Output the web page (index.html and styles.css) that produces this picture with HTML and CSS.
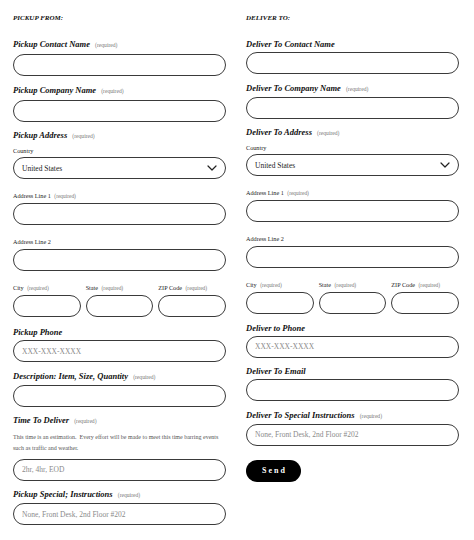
FILE: index.html
```html
<!DOCTYPE html>
<html lang="en">
<head>
<meta charset="utf-8">
<title>Delivery Request</title>
<link rel="stylesheet" href="styles.css">
</head>
<body>
<form class="page">
  <section class="col">
    <h2 class="heading">PICKUP FROM:</h2>
    <div class="field">
      <div class="label label-tall">Pickup Contact Name <span class="req">(required)</span></div>
      <input class="input" type="text">
    </div>
    <div class="field">
      <div class="label label-tall">Pickup Company Name <span class="req">(required)</span></div>
      <input class="input" type="text">
    </div>
    <div class="field">
      <div class="label label-group">Pickup Address <span class="req">(required)</span></div>
      <div class="sublabel sublabel-first">Country</div>
      <div class="input select"><span>United States</span><svg class="chev" width="10" height="6" viewBox="0 0 10 6"><path d="M1 1 L5 5 L9 1" fill="none" stroke="#222" stroke-width="1.2" stroke-linecap="round" stroke-linejoin="round"/></svg></div>
      <div class="sublabel">Address Line 1 <span class="req">(required)</span></div>
      <input class="input" type="text">
      <div class="sublabel">Address Line 2</div>
      <input class="input" type="text">
      <div class="trio">
        <div class="cell"><div class="sublabel">City <span class="req">(required)</span></div><input class="input" type="text"></div>
        <div class="cell"><div class="sublabel">State <span class="req">(required)</span></div><input class="input" type="text"></div>
        <div class="cell"><div class="sublabel">ZIP Code <span class="req">(required)</span></div><input class="input" type="text"></div>
      </div>
    </div>
    <div class="field field-loose">
      <div class="label">Pickup Phone</div>
      <input class="input" type="text" placeholder="XXX-XXX-XXXX">
    </div>
    <div class="field">
      <div class="label">Description: Item, Size, Quantity <span class="req">(required)</span></div>
      <input class="input" type="text">
    </div>
    <div class="field">
      <div class="label label-group">Time To Deliver <span class="req">(required)</span></div>
      <p class="help">This time is an estimation.&nbsp; Every effort will be made to meet this time barring events such as traffic and weather.</p>
      <input class="input" type="text" placeholder="2hr, 4hr, EOD">
    </div>
    <div class="field">
      <div class="label">Pickup Special; Instructions <span class="req">(required)</span></div>
      <input class="input" type="text" placeholder="None, Front Desk, 2nd Floor #202">
    </div>
  </section>

  <section class="col">
    <h2 class="heading">DELIVER TO:</h2>
    <div class="field">
      <div class="label">Deliver To Contact Name</div>
      <input class="input" type="text">
    </div>
    <div class="field">
      <div class="label">Deliver To Company Name <span class="req">(required)</span></div>
      <input class="input" type="text">
    </div>
    <div class="field">
      <div class="label label-group">Deliver To Address <span class="req">(required)</span></div>
      <div class="sublabel sublabel-first">Country</div>
      <div class="input select"><span>United States</span><svg class="chev" width="10" height="6" viewBox="0 0 10 6"><path d="M1 1 L5 5 L9 1" fill="none" stroke="#222" stroke-width="1.2" stroke-linecap="round" stroke-linejoin="round"/></svg></div>
      <div class="sublabel">Address Line 1 <span class="req">(required)</span></div>
      <input class="input" type="text">
      <div class="sublabel">Address Line 2</div>
      <input class="input" type="text">
      <div class="trio">
        <div class="cell"><div class="sublabel">City <span class="req">(required)</span></div><input class="input" type="text"></div>
        <div class="cell"><div class="sublabel">State <span class="req">(required)</span></div><input class="input" type="text"></div>
        <div class="cell"><div class="sublabel">ZIP Code <span class="req">(required)</span></div><input class="input" type="text"></div>
      </div>
    </div>
    <div class="field">
      <div class="label">Deliver to Phone</div>
      <input class="input" type="text" placeholder="XXX-XXX-XXXX">
    </div>
    <div class="field">
      <div class="label">Deliver To Email</div>
      <input class="input" type="text">
    </div>
    <div class="field">
      <div class="label">Deliver To Special Instructions <span class="req">(required)</span></div>
      <input class="input" type="text" placeholder="None, Front Desk, 2nd Floor #202">
    </div>
    <button class="send" type="button">Send</button>
  </section>
</form>
</body>
</html>
```

FILE: styles.css
```css
html, body {
  margin: 0;
  padding: 0;
  background: #ffffff;
}

body {
  color: #111111;
  font-family: "Liberation Serif", "Times New Roman", serif;
}

.page {
  display: grid;
  grid-template-columns: 213px 213px;
  column-gap: 20px;
  align-items: start;
  padding: 13px 0 0 13px;
  margin: 0;
}

.col {
  display: flex;
  flex-direction: column;
}

.heading {
  margin: 0 0 15px;
  font-size: 7px;
  line-height: 10px;
  font-weight: bold;
  font-style: italic;
  color: #111;
}

.field {
  display: flex;
  flex-direction: column;
}

.field + .field {
  margin-top: 7.5px;
}

.field + .field-loose {
  margin-top: 9px;
}

.label {
  font-size: 8.5px;
  line-height: 12px;
  font-weight: bold;
  font-style: italic;
  color: #111;
  margin-bottom: 2px;
  white-space: nowrap;
}

.label-tall {
  margin-bottom: 3px;
}

.label-group {
  margin-bottom: 0;
}

.req {
  font-size: 5.6px;
  font-weight: normal;
  font-style: normal;
  color: #777;
  margin-left: 3px;
}

.input {
  display: block;
  box-sizing: border-box;
  width: 100%;
  height: 22px;
  margin: 0;
  padding: 0 8px;
  border: 1.4px solid #3a3a3a;
  border-radius: 11px;
  background: #ffffff;
  font-family: "Liberation Serif", "Times New Roman", serif;
  font-size: 7.5px;
  color: #222;
  outline: none;
}

.input::placeholder {
  color: #8a8a8a;
  opacity: 1;
}

.select {
  display: flex;
  align-items: center;
  justify-content: space-between;
  padding: 0 8px 0 8px;
}

.chev {
  display: block;
}

.sublabel {
  font-size: 6.2px;
  line-height: 8px;
  color: #222;
  margin: 13px 0 3px;
  white-space: nowrap;
}

.sublabel .req {
  font-size: 5.4px;
  margin-left: 2px;
}

.sublabel-first {
  margin: 5px 0 2px;
}

.trio {
  display: grid;
  grid-template-columns: 1fr 1fr 1fr;
  column-gap: 5px;
}

.cell {
  display: flex;
  flex-direction: column;
}

.help {
  margin: 5px 0 4.5px;
  font-size: 6px;
  line-height: 11px;
  color: #555;
}

.send {
  align-self: flex-start;
  margin-top: 14px;
  width: 55px;
  height: 22px;
  border: 0;
  border-radius: 11px;
  background: #000;
  color: #fff;
  font-family: "Liberation Serif", "Times New Roman", serif;
  font-size: 8px;
  font-weight: bold;
  letter-spacing: 2px;
  padding: 0 0 0 2px;
}
```
